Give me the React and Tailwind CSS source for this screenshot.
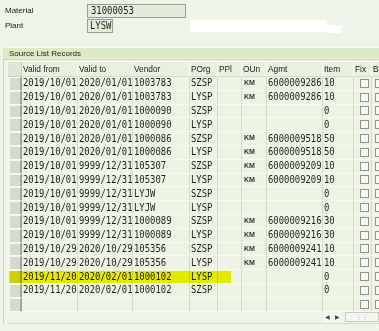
import React from 'react';

const rows = [
  ['2019/10/01', '2020/01/01', '1003783', 'SZSP', 'KM', '6000009286', '10'],
  ['2019/10/01', '2020/01/01', '1003783', 'LYSP', 'KM', '6000009286', '10'],
  ['2019/10/01', '2020/01/01', '1000090', 'SZSP', '', '', '0'],
  ['2019/10/01', '2020/01/01', '1000090', 'LYSP', '', '', '0'],
  ['2019/10/01', '2020/01/01', '1000086', 'SZSP', 'KM', '6000009518', '50'],
  ['2019/10/01', '2020/01/01', '1000086', 'LYSP', 'KM', '6000009518', '50'],
  ['2019/10/01', '9999/12/31', '105307', 'SZSP', 'KM', '6000009209', '10'],
  ['2019/10/01', '9999/12/31', '105307', 'LYSP', 'KM', '6000009209', '10'],
  ['2019/10/01', '9999/12/31', 'LYJW', 'SZSP', '', '', '0'],
  ['2019/10/01', '9999/12/31', 'LYJW', 'LYSP', '', '', '0'],
  ['2019/10/01', '9999/12/31', '1000089', 'SZSP', 'KM', '6000009216', '30'],
  ['2019/10/01', '9999/12/31', '1000089', 'LYSP', 'KM', '6000009216', '30'],
  ['2019/10/29', '2020/10/29', '105356', 'SZSP', 'KM', '6000009241', '10'],
  ['2019/10/29', '2020/10/29', '105356', 'LYSP', 'KM', '6000009241', '10'],
  ['2019/11/20', '2020/02/01', '1000102', 'LYSP', '', '', '0', true],
  ['2019/11/20', '2020/02/01', '1000102', 'SZSP', '', '', '0'],
];

const grid =
  'grid grid-cols-[14px_56px_55px_57px_28px_24px_25px_56px_31px_18px_30px]';
const cell = 'border-r border-b border-r-[#d2dac8] border-b-[#f7faf2] pl-[1px] flex items-center overflow-hidden whitespace-nowrap';

const Mono = ({ children }) => (
  <span className="inline-block origin-left scale-x-[0.89] font-['DejaVu_Sans_Mono',monospace] text-[10px] leading-none text-[#1e1e1e]">
    {children}
  </span>
);

const Selector = () => (
  <div className="border-r border-b border-r-[#9aa092] border-b-[#f7faf2] flex">
    <div className="ml-[1px] w-[12px] h-full bg-[#d5dacd] border-l border-t border-[#f5f7f0] border-r border-r-[#a3a99b]" />
  </div>
);

const Check = ({ ml = 'ml-[5px]' }) => (
  <div className={`${ml} w-[9px] h-[9px] border border-[#8f938a] bg-[#f7f8f4]`} />
);

export default function App() {
  return (
    <div className="w-[379px] h-[331px] overflow-hidden bg-[#eff4e8] font-['Liberation_Sans',Arial,sans-serif] text-[#1a1a1a]">
      <div className="pt-[4px] flex flex-col gap-[1px]">
        <div className="flex items-center h-[14px]">
          <div className="w-[87px] pl-[5px] text-[8px]">Material</div>
          <div className="w-[99px] h-[14px] border border-[#9c9c8e] bg-[#e3ecd9] pl-[3px] flex items-center overflow-hidden">
            <Mono>31000053</Mono>
          </div>
        </div>
        <div className="flex items-center h-[14px]">
          <div className="w-[87px] pl-[5px] text-[8px]">Plant</div>
          <div className="w-[26px] h-[14px] border border-[#9c9c8e] bg-[#e3ecd9] pl-[2px] flex items-center overflow-hidden">
            <Mono>LYSW</Mono>
          </div>
          <div className="ml-[77px] flex items-start">
            <div className="w-[137px] h-[12px] bg-white" />
            <div className="w-[14px] h-[8px] mt-[5px] bg-white" />
          </div>
        </div>
      </div>

      <div className="mt-[14px] ml-[3px] border-t border-[#f8fbf3]">
        <div className="h-[12px] bg-[#dcebc6] border-b border-[#c9d8b4] pl-[6px] flex items-center text-[8px]">
          Source List Records
        </div>
        <div className="border-l border-[#c8d3bb] pl-[4px] pt-[1px]">
          <div className={`${grid} h-[16px] bg-[#e8f0de] border-t border-white text-[8.3px]`}>
            <div className="border-r border-b border-[#c9d1c0] bg-[#dfe6d6]" />
            {['Valid from', 'Valid to', 'Vendor', 'POrg', 'PPl', 'OUn', 'Agmt', 'Item', 'Fix', 'B'].map((h) => (
              <div key={h} className="border-r border-[#fbfdf8] border-b border-b-[#d5ddcb] pl-[1px] flex items-center">
                {h}
              </div>
            ))}
          </div>

          {rows.map((r, i) => (
            <div key={i} className="relative">
              <div className={`${grid} h-[13.8px] bg-[#edf4e3]`}>
                <Selector />
                <div className={cell}><Mono>{r[0]}</Mono></div>
                <div className={cell}><Mono>{r[1]}</Mono></div>
                <div className={cell}><Mono>{r[2]}</Mono></div>
                <div className={cell}><Mono>{r[3]}</Mono></div>
                <div className={cell} />
                <div className={`${cell} text-[7px] font-bold text-[#333] pl-[2px]`}>{r[4]}</div>
                <div className={cell}><Mono>{r[5]}</Mono></div>
                <div className={cell}><Mono>{r[6]}</Mono></div>
                <div className={cell}>
                  <Check />
                </div>
                <div className={cell}>
                  <Check ml="ml-[2px]" />
                </div>
              </div>
              {r[7] && (
                <div className="absolute left-[1px] top-[1px] w-[222px] h-[12px] bg-[#f3f500] mix-blend-multiply" />
              )}
            </div>
          ))}

          <div className={`${grid} h-[13.8px] bg-[#edf4e3]`}>
            <Selector />
            {[0, 1, 2, 3, 4, 5, 6, 7].map((k) => (
              <div key={k} className={cell} />
            ))}
            <div className={cell}>
              <Check />
            </div>
            <div className={cell}>
              <Check ml="ml-[2px]" />
            </div>
          </div>

          <div className="flex items-center h-[12px] border-b border-[#d2dac8]">
            <div className="ml-[316px] flex items-center gap-[3px] text-[6px] text-[#444]">
              <span className="w-[7px] h-[9px] bg-[#f6f8f2] flex items-center justify-center">◀</span>
              <span className="w-[7px] h-[9px] bg-[#f6f8f2] flex items-center justify-center">▶</span>
            </div>
            <div className="ml-[4px] flex-1 h-[10px] bg-[#f5f7f1] border border-[#c6cdbd] flex items-center justify-center text-[6px] text-[#b0b5aa]">
              ⋮⋮
            </div>
          </div>
        </div>
      </div>
    </div>
  );
}
